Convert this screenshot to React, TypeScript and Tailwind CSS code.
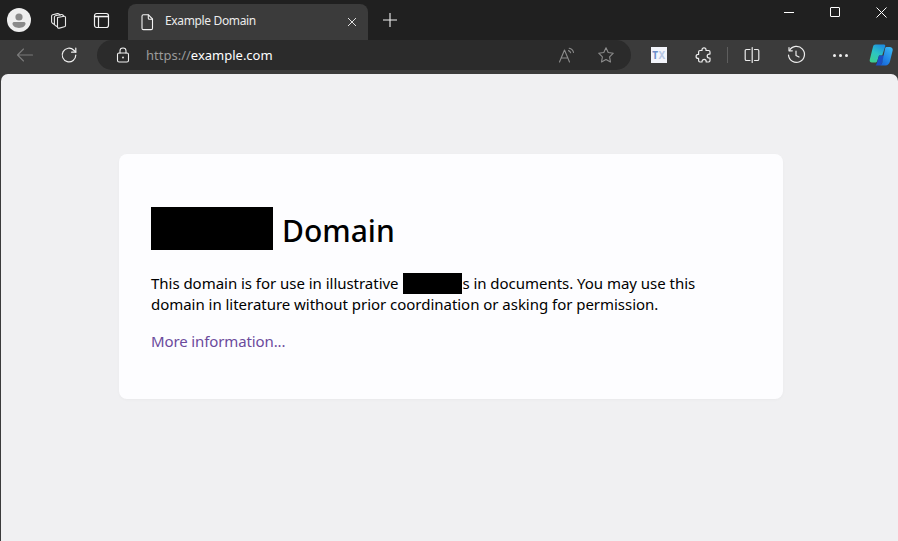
const Stroke = (props: { size?: number; className?: string; children: React.ReactNode }) => {
  const size = props.size ?? 20;
  return (
    <svg
      width={size}
      height={size}
      viewBox="0 0 20 20"
      fill="none"
      stroke="currentColor"
      strokeWidth="1.1"
      strokeLinecap="round"
      strokeLinejoin="round"
      className={props.className}
    >
      {props.children}
    </svg>
  );
};

const Profile = () => (
  <svg width="24" height="24" viewBox="0 0 24 24" className="ml-[7px] shrink-0">
    <circle cx="12" cy="12" r="12" fill="#eeeeee" />
    <circle cx="12" cy="9" r="3.6" fill="#8a8a8a" />
    <path d="M5.5 15.600c0-1 .8-1.600 1.800-1.600h9.400c1 0 1.800.6 1.800 1.600 0 2.600-3 4.400-6.500 4.400s-6.500-1.800-6.500-4.400z" fill="#8a8a8a" />
  </svg>
);

const Collections = () => (
  <Stroke className="text-[#e8e8e8] ml-[17px] shrink-0">
    <path d="M9.500 7.500l6.600-1.200c.8-.1 1.400.4 1.400 1.200v8c0 .7-.4 1.200-1.100 1.300l-5 1.300c-1.200.3-1.900-.3-1.900-1.300z" />
    <path d="M9.500 16.800l-2.200-1.300c-.6-.4-.9-.9-.9-1.500V7c0-.6.4-1 1-1.200l6-1.300c.7-.1 1.200.1 1.600.6l.8 1.300" />
    <path d="M6.400 14.500l-1.900-1.200c-.6-.4-.9-.9-.9-1.500V6c0-.6.4-1 1-1.200l4.800-1.200c.8-.2 1.300 0 1.800.6l.8 1" />
  </Stroke>
);

const TabsIcon = () => (
  <Stroke className="text-[#f2f2f2] ml-[23px] shrink-0">
    <rect x="3.500" y="3.500" width="14" height="14" rx="2.200" strokeWidth="1.200" />
    <path d="M3.500 5.800h14v1.500h-14z" fill="currentColor" stroke="none" />
    <path d="M7.500 7.500v10" strokeWidth="1.200" />
  </Stroke>
);

const PageIcon = () => (
  <Stroke className="text-[#f2f2f2] shrink-0">
    <path d="M5 4.200c0-.9.6-1.400 1.400-1.400h5.100l4 4.200v9.200c0 .9-.6 1.400-1.400 1.400H6.400c-.8 0-1.400-.5-1.400-1.400z" />
    <path d="M11.300 3v3.200c0 .6.4 1 1 1h3" />
  </Stroke>
);

const Tab = () => (
  <div className="ml-[17px] mt-1 h-9 w-60 shrink-0 rounded-t-lg bg-[#3b3b3b] flex items-center pl-[9px] pr-[11px] text-[#ececec]">
    <PageIcon />
    <span className="ml-[8px] text-xs leading-none tracking-[-0.35px] mb-[3px]">Example Domain</span>
    <svg width="10" height="10" viewBox="0 0 10 10" stroke="#e0e0e0" strokeWidth="1" className="ml-auto mb-[1px]">
      <path d="M1 1l8 8M9 1l-8 8" />
    </svg>
  </div>
);

const WindowControls = () => (
  <div className="ml-auto flex items-start h-full pt-[6px] text-white">
    <div className="w-[46px] h-[10px] flex items-center justify-center mt-[1px]">
      <div className="w-[10px] h-px bg-white" />
    </div>
    <div className="w-[46px] h-[10px] flex items-center justify-center mt-[1px]">
      <div className="w-[10px] h-[10px] border border-white rounded-[1px]" />
    </div>
    <div className="ml-[6px] w-[34px] h-[10px] flex items-center justify-center mt-[1px]">
      <svg width="11" height="11" viewBox="0 0 11 11" stroke="#fff" strokeWidth="1">
        <path d="M.5.5l10 10M10.500.5l-10 10" />
      </svg>
    </div>
  </div>
);

const AddressBar = () => (
  <div className="ml-[18px] w-[534px] h-[30px] rounded-[15px] bg-[#2b2b2b] flex items-center shrink-0 pl-[16px] pr-[15px]">
    <Stroke className="text-[#f0f0f0] shrink-0">
      <rect x="4.500" y="8" width="11" height="9" rx="1.600" />
      <path d="M7 8V5.800C7 4.100 8.300 3 10 3s3 1.100 3 2.800V8" />
      <circle cx="10" cy="12.500" r=".9" fill="currentColor" stroke="none" />
    </Stroke>
    <span className="ml-[13px] text-[13px] leading-none text-[#9a9a9a]">
      https://<span className="text-white">example.com</span>
    </span>
    <div className="ml-auto flex items-center gap-[19px] text-[#8c8c8c]">
      <Stroke>
        <path d="M2.500 17L7.500 5l5 12M4.200 13h6.600" />
        <path d="M11.500 5.600c1.100.3 1.900 1.100 2.200 2.200M12.200 3.200c2.200.4 3.800 2 4.300 4.200" />
      </Stroke>
      <Stroke>
        <path d="M10 2.800l2.200 4.700 5.100.7-3.700 3.600.9 5.200L10 14.500 5.500 17l.9-5.200-3.700-3.600 5.100-.7z" />
      </Stroke>
    </div>
  </div>
);

const TranslateIcon = () => (
  <div className="ml-5 w-4 h-4 bg-[#f3f5fb] flex items-center justify-center shrink-0 text-[10px] font-bold leading-none tracking-[0.5px]">
    <span className="text-[#6d8fc9]">T</span>
    <span className="text-[#b9c9e6]">X</span>
  </div>
);

const ToolbarIcons = () => (
  <div className="flex items-center text-[#ececec] shrink-0">
    <TranslateIcon />
    <Stroke className="ml-[27px]">
      <path d="M8 4.800c0-1.100.9-2 2-2s2 .9 2 2v.7h2.600c.9 0 1.400.5 1.400 1.400v2.200h-.8c-1.100 0-2 .9-2 1.900s.9 2 2 2h.8v2.600c0 .9-.5 1.400-1.400 1.400h-2.400v-.6c0-1.200-.9-2.100-2-2.100s-2.200.9-2.200 2.100v.6H6c-.9 0-1.400-.5-1.400-1.400v-2.200h-.4c-1.200 0-2.100-.9-2.100-2s.9-2 2.100-2h.4V6.900c0-.9.5-1.400 1.400-1.400H8z" strokeWidth="1.200" />
    </Stroke>
    <div className="ml-[13px] h-4 w-px bg-[#5e5e5e]" />
    <Stroke className="ml-[14px]">
      <path d="M8 4.500H4.500c-.8 0-1.300.5-1.300 1.300v8.400c0 .8.5 1.300 1.300 1.300H8M12.500 4.500h3c.8 0 1.300.5 1.300 1.300v8.400c0 .8-.5 1.300-1.300 1.300h-3M10.200 2.500v15" strokeWidth="1.200" />
    </Stroke>
    <Stroke className="ml-[24px]">
      <path d="M3.500 5.500A8 8 0 1 1 2.500 10" strokeWidth="1.200" />
      <path d="M3 2.500v3.300h3.300M10 6v4.500l3 1.500" strokeWidth="1.200" />
    </Stroke>
    <div className="ml-[27px] flex items-center gap-[3px]">
      <span className="w-[3px] h-[3px] rounded-full bg-[#f0f0f0]" />
      <span className="w-[3px] h-[3px] rounded-full bg-[#f0f0f0]" />
      <span className="w-[3px] h-[3px] rounded-full bg-[#f0f0f0]" />
    </div>
    <svg width="25" height="25" viewBox="0 0 25 25" className="ml-[21px]">
      <defs>
        <linearGradient id="copilotA" x1="0.7" y1="0" x2="0.2" y2="1">
          <stop offset="0" stopColor="#1d8fe0" />
          <stop offset="0.5" stopColor="#2cc4c4" />
          <stop offset="1" stopColor="#3ccf8e" />
        </linearGradient>
        <linearGradient id="copilotB" x1="0.8" y1="0" x2="0.2" y2="1">
          <stop offset="0" stopColor="#38b6f5" />
          <stop offset="1" stopColor="#1668dc" />
        </linearGradient>
      </defs>
      <path d="M6.500 1.500H15c1 0 1.500.8 1.200 1.800l-3 9.200H10l-1.800 5.500c-.4 1.100-1.200 1.500-2.200 1.500H3c-1.800 0-2.700-1.300-2.200-3L4 3.800C4.400 2.400 5.200 1.500 6.500 1.500z" fill="url(#copilotA)" />
      <path d="M8.500 18l1.500-5.500h5.500L13 20c-.4 1.200-.8 2-1.500 2.500H6.500c1-.5 1.500-3 2-4.500z" fill="#1b4fc4" />
      <path d="M17 4h3.500c2.200 0 3.600 1.400 3.200 3.300l-2.700 11c-.6 2.600-2.300 4.200-4.500 4.200H11c1-.4 1.700-1.300 2.200-2.800L16 6c.2-1 .4-1.500 1-2z" fill="url(#copilotB)" />
    </svg>
  </div>
);

const App = () => {
  return (
    <div className="w-[898px] h-[541px] overflow-hidden flex flex-col bg-[#3b3b3b] font-['Noto_Sans','Open_Sans',sans-serif]">
      <div className="h-10 bg-[#202020] flex items-center shrink-0">
        <Profile />
        <Collections />
        <TabsIcon />
        <Tab />
        <svg width="16" height="16" viewBox="0 0 16 16" stroke="#f0f0f0" strokeWidth="1.100" className="ml-[14px] shrink-0">
          <path d="M8 1v14M1 8h14" />
        </svg>
        <WindowControls />
      </div>
      <div className="h-[34px] flex items-start shrink-0">
        <div className="h-[30px] flex items-center shrink-0">
          <Stroke className="ml-[15px] text-[#7a7a7a]">
            <path d="M17.500 10h-15M8.500 4l-6 6 6 6" />
          </Stroke>
          <Stroke className="ml-[24px] text-[#f0f0f0]">
            <path d="M16.800 10a6.800 6.800 0 1 1-2-4.800l2 2" strokeWidth="1.200" />
            <path d="M16.800 3v4.200h-4.200" strokeWidth="1.200" />
          </Stroke>
        </div>
        <AddressBar />
        <div className="h-[30px] flex items-center">
          <ToolbarIcons />
        </div>
      </div>
      <div className="flex-1 ml-px rounded-t-[7px] bg-[#f0f0f2] pt-20 pl-[118px]">
        <div className="w-[664px] h-[245px] rounded-lg bg-[#fdfdff] pl-8 pr-8 pt-[53px] shadow-[0_1px_3px_rgba(0,0,0,0.03)]">
          <div className="flex items-center h-[43px] text-[30px] font-medium text-black leading-none">
            <div className="w-[122px] h-[43px] bg-black shrink-0" />
            <span className="ml-[9px] mt-1">Domain</span>
          </div>
          <p className="mt-[23px] text-[15px] leading-[21px] text-black tracking-[-0.03px]">
            This domain is for use in illustrative{" "}
            <span className="inline-block ml-px w-[59px] h-[21px] bg-black align-top" />s in documents. You may use this
            <br />
            domain in literature without prior coordination or asking for permission.
          </p>
          <p className="mt-4 text-[15px] leading-[21px] text-[#6b4a9c] tracking-[-0.12px]">More information...</p>
        </div>
      </div>
    </div>
  );
};

export default App;
